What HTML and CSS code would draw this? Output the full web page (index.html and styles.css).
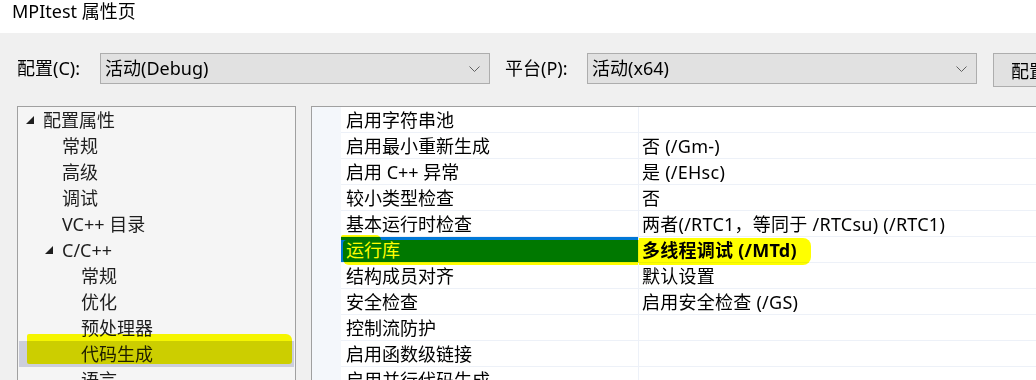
FILE: index.html
```html
<!DOCTYPE html>
<html lang="zh-CN">
<head>
<meta charset="utf-8">
<title>MPItest 属性页</title>
<link rel="stylesheet" href="styles.css">
</head>
<body>
<div class="dialog">
  <header class="titlebar">MPItest 属性页</header>

  <div class="toolbar">
    <label class="tb-label tb-config">配置(C):</label>
    <div class="combo combo-config">
      <span class="combo-text">活动(Debug)</span>
      <svg class="chev" width="11" height="7" viewBox="0 0 11 7"><polyline points="0.5,0.5 5.5,5.5 10.5,0.5" fill="none" stroke="#606060" stroke-width="1"/></svg>
    </div>
    <label class="tb-label tb-platform">平台(P):</label>
    <div class="combo combo-platform">
      <span class="combo-text">活动(x64)</span>
      <svg class="chev" width="11" height="7" viewBox="0 0 11 7"><polyline points="0.5,0.5 5.5,5.5 10.5,0.5" fill="none" stroke="#606060" stroke-width="1"/></svg>
    </div>
    <button class="btn-manager">配置管理器(O)...</button>
  </div>

  <div class="main">
    <nav class="tree">
      <div class="node lvl0"><span class="exp"><svg width="8" height="8" viewBox="0 0 8 8"><polygon points="8,0 8,8 0,8" fill="#1e1e1e"/></svg></span><span>配置属性</span></div>
      <div class="node lvl1"><span class="exp"></span><span>常规</span></div>
      <div class="node lvl1"><span class="exp"></span><span>高级</span></div>
      <div class="node lvl1"><span class="exp"></span><span>调试</span></div>
      <div class="node lvl1"><span class="exp"></span><span>VC++ 目录</span></div>
      <div class="node lvl1"><span class="exp"><svg width="8" height="8" viewBox="0 0 8 8"><polygon points="8,0 8,8 0,8" fill="#1e1e1e"/></svg></span><span>C/C++</span></div>
      <div class="node lvl2"><span class="exp"></span><span>常规</span></div>
      <div class="node lvl2"><span class="exp"></span><span>优化</span></div>
      <div class="node lvl2"><span class="exp"></span><span>预处理器</span></div>
      <div class="node lvl2 selected"><span class="exp"></span><span>代码生成</span><span class="marker marker-tree"></span></div>
      <div class="node lvl2"><span class="exp"></span><span>语言</span></div>
    </nav>

    <section class="grid">
      <div class="gutter"></div>
      <div class="rows">
        <div class="row"><div class="name">启用字符串池</div><div class="value"></div></div>
        <div class="row"><div class="name">启用最小重新生成</div><div class="value">否 (/Gm-)</div></div>
        <div class="row"><div class="name">启用 C++ 异常</div><div class="value">是 (/EHsc)</div></div>
        <div class="row"><div class="name">较小类型检查</div><div class="value">否</div></div>
        <div class="row"><div class="name">基本运行时检查</div><div class="value">两者(/RTC1，等同于 /RTCsu) (/RTC1)</div></div>
        <div class="row selected"><div class="name">运行库<span class="marker marker-name"></span><span class="marker marker-name-top"></span></div><div class="value bold">多线程调试 (/MTd)<span class="marker marker-value"></span></div></div>
        <div class="row"><div class="name">结构成员对齐</div><div class="value">默认设置</div></div>
        <div class="row"><div class="name">安全检查</div><div class="value">启用安全检查 (/GS)</div></div>
        <div class="row"><div class="name">控制流防护</div><div class="value"></div></div>
        <div class="row"><div class="name">启用函数级链接</div><div class="value"></div></div>
        <div class="row"><div class="name">启用并行代码生成</div><div class="value"></div></div>
      </div>
    </section>
  </div>
</div>
</body>
</html>
```

FILE: styles.css
```css
* { box-sizing: border-box; }

html, body {
  margin: 0;
  padding: 0;
}

body {
  width: 1036px;
  height: 380px;
  overflow: hidden;
  background: #f0f0f0;
  font-family: "Noto Sans", "Noto Sans CJK SC", sans-serif;
  font-size: 18px;
  color: #000;
}

.dialog {
  width: 1036px;
  height: 380px;
  display: flex;
  flex-direction: column;
  overflow: hidden;
}

.titlebar {
  height: 33px;
  background: #ffffff;
  padding-left: 12px;
  line-height: 23px;
  font-size: 18px;
  color: #000;
  white-space: nowrap;
  flex: none;
}

.toolbar {
  display: flex;
  align-items: flex-start;
  padding: 20px 0 0 17px;
  height: 73px;
  white-space: nowrap;
  flex: none;
  overflow: hidden;
}

.tb-label {
  height: 31px;
  line-height: 31px;
  color: #000;
  flex: none;
}

.tb-config { width: 83px; }
.tb-platform { width: 82px; margin-left: 15px; }

.combo {
  position: relative;
  height: 31px;
  background: #e1e1e1;
  border: 1px solid #adadad;
  display: flex;
  align-items: center;
  padding-left: 4px;
  flex: none;
}

.combo-config { width: 390px; }
.combo-platform { width: 390px; }

.combo-text { line-height: 29px; }

.chev {
  position: absolute;
  right: 9px;
  top: 12px;
}

.btn-manager {
  margin-left: 16px;
  height: 34px;
  width: 200px;
  flex: none;
  background: #e1e1e1;
  border: 1px solid #adadad;
  font: inherit;
  text-align: left;
  padding: 0 0 0 17px;
  color: #000;
  white-space: nowrap;
}

.main {
  display: flex;
  padding-left: 17px;
  gap: 15px;
  flex: 1;
  min-height: 0;
  overflow: hidden;
}

.tree {
  width: 279px;
  flex: none;
  height: 300px;
  background: #f5f5f5;
  border: 1px solid #a0a0a0;
  border-bottom: none;
  color: #1e1e1e;
  overflow: hidden;
}

.node {
  position: relative;
  display: flex;
  align-items: center;
  height: 26px;
  line-height: 26px;
  white-space: nowrap;
}

.node span { position: relative; }

.lvl0 { padding-left: 8px; }
.lvl1 { padding-left: 27px; }
.lvl2 { padding-left: 46px; }

.exp {
  width: 17px;
  flex: none;
  display: flex;
  align-items: center;
  height: 26px;
}

.node.selected {
  background: #cccedb;
  margin: 0 1px;
  padding-left: 45px;
}

.marker {
  position: absolute;
  background: #ffff00;
  mix-blend-mode: multiply;
  pointer-events: none;
}

.marker-tree {
  position: absolute !important;
  left: 8px;
  top: -7px;
  width: 265px;
  height: 30px;
  border-radius: 2px 6px 3px 2px;
}

.grid {
  flex: 1;
  display: flex;
  border-top: 1px solid #a0a0a0;
  border-left: 1px solid #a0a0a0;
  background: #ffffff;
  height: 300px;
  overflow: hidden;
}

.gutter {
  width: 29px;
  flex: none;
  background: #f4f7fb;
}

.rows {
  flex: 1;
  display: flex;
  flex-direction: column;
}

.row {
  position: relative;
  display: flex;
  height: 26px;
  border-bottom: 1px solid #edf1f8;
  white-space: nowrap;
  flex: none;
}

.name {
  position: relative;
  width: 298px;
  flex: none;
  padding-left: 5px;
  line-height: 26px;
  border-right: 1px solid #edf1f8;
}

.value {
  position: relative;
  flex: 1;
  padding-left: 3px;
  line-height: 26px;
  letter-spacing: 0.25px;
}

.row.selected .name {
  background: #0078d7;
  color: #ffffff;
}

.bold { font-weight: 700; }

.marker-name {
  left: 2px;
  top: 3px;
  width: 298px;
  height: 25px;
  border-radius: 4px 0 0 6px;
}

.marker-name-top {
  left: 0;
  top: -2px;
  width: 40px;
  height: 5px;
  border-radius: 3px 8px 0 0;
}

.marker-value {
  left: 0;
  top: 1px;
  width: 172px;
  height: 27px;
  border-radius: 0 8px 8px 0;
}
```
